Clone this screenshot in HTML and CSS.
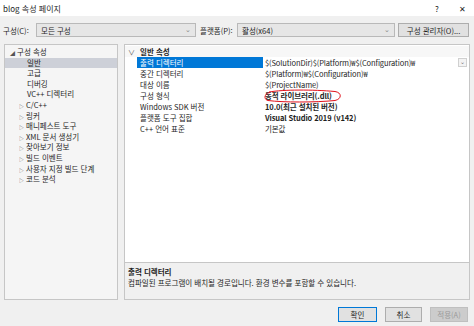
FILE: index.html
```html
<!DOCTYPE html>
<html lang="ko">

<head>
    <meta charset="UTF-8">
    <title>blog 속성 페이지</title>
    <link rel="stylesheet" href="styles.css">
</head>

<body>
    <div class="titleBar">
        <span class="title">blog 속성 페이지</span>
        <span class="help">?</span>
        <span class="close">✕</span>
    </div>

    <div class="toolbar">
        <span class="lblConfig">구성(C):</span>
        <div class="combo comboConfig"><span>모든 구성</span><span class="arrow">⌄</span></div>
        <span class="lblPlatform">플랫폼(P):</span>
        <div class="combo comboPlatform"><span>활성(x64)</span><span class="arrow">⌄</span></div>
        <div class="btn btnManager">구성 관리자(O)...</div>
    </div>

    <div class="main">
        <div class="tree">
            <div class="node root"><span class="tri">◢</span>구성 속성</div>
            <div class="node leaf selected">일반</div>
            <div class="node leaf">고급</div>
            <div class="node leaf">디버깅</div>
            <div class="node leaf">VC++ 디렉터리</div>
            <div class="node branch"><span class="tri">▷</span>C/C++</div>
            <div class="node branch"><span class="tri">▷</span>링커</div>
            <div class="node branch"><span class="tri">▷</span>매니페스트 도구</div>
            <div class="node branch"><span class="tri">▷</span>XML 문서 생성기</div>
            <div class="node branch"><span class="tri">▷</span>찾아보기 정보</div>
            <div class="node branch"><span class="tri">▷</span>빌드 이벤트</div>
            <div class="node branch"><span class="tri">▷</span>사용자 지정 빌드 단계</div>
            <div class="node branch"><span class="tri">▷</span>코드 분석</div>
        </div>

        <div class="right">
            <div class="grid">
                <div class="category"><span class="chev">∨</span>일반 속성</div>
                <div class="row selected">
                    <div class="name">출력 디렉터리</div>
                    <div class="value">$(SolutionDir)$(Platform)₩$(Configuration)₩<span class="drop">⌄</span></div>
                </div>
                <div class="row">
                    <div class="name">중간 디렉터리</div>
                    <div class="value">$(Platform)₩$(Configuration)₩</div>
                </div>
                <div class="row">
                    <div class="name">대상 이름</div>
                    <div class="value">$(ProjectName)</div>
                </div>
                <div class="row">
                    <div class="name">구성 형식</div>
                    <div class="value bold">동적 라이브러리(.dll)
                        <svg class="circle" width="80" height="14" viewBox="0 0 80 14">
                            <path d="M6 3 C20 0.5 50 0.5 72 2.5 C79 3.5 79 10 72 11.5 C52 13.5 20 13.5 5 11.5 C0.5 10.5 1 4.5 7 3.5" fill="none" stroke="#e0101a" stroke-width="1"/>
                        </svg>
                    </div>
                </div>
                <div class="row">
                    <div class="name">Windows SDK 버전</div>
                    <div class="value bold">10.0(최근 설치된 버전)</div>
                </div>
                <div class="row">
                    <div class="name">플랫폼 도구 집합</div>
                    <div class="value bold">Visual Studio 2019 (v142)</div>
                </div>
                <div class="row">
                    <div class="name">C++ 언어 표준</div>
                    <div class="value">기본값</div>
                </div>
            </div>
            <div class="desc">
                <b>출력 디렉터리</b><br>
                컴파일된 프로그램이 배치될 경로입니다. 환경 변수를 포함할 수 있습니다.
            </div>
        </div>
    </div>

    <div class="footer">
        <div class="btn btnOk">확인</div>
        <div class="btn btnCancel">취소</div>
        <div class="btn btnApply">적용(A)</div>
    </div>
</body>

</html>
```

FILE: styles.css
```css
body {
    margin: 0;
    width: 474px;
    height: 326px;
    background-color: #f0f0f0;
    font-family: "Noto Sans CJK KR", "Noto Sans", sans-serif;
    font-size: 7.5px;
    color: #1e1e1e;
    overflow: hidden;
}

.titleBar {
    height: 16px;
    background-color: #ffffff;
    display: flex;
    align-items: center;
    padding-left: 3px;
    font-size: 8px;
}

.title {
    flex: 1;
}

.help {
    width: 30px;
    text-align: center;
}

.close {
    width: 20px;
    margin-right: 2px;
    text-align: center;
    font-size: 8px;
}

.toolbar {
    display: flex;
    align-items: center;
    height: 16px;
    margin-top: 6px;
    padding-left: 3px;
}

.lblConfig {
    width: 33px;
}

.lblPlatform {
    width: 37px;
    margin-left: 4px;
}

.combo {
    height: 14px;
    border: 1px solid #b9b9b9;
    background-color: #e6e6e6;
    display: flex;
    align-items: center;
    justify-content: space-between;
    padding: 0 4px;
    box-sizing: border-box;
}

.comboConfig {
    width: 160px;
}

.comboPlatform {
    width: 158px;
}

.arrow {
    color: #888;
    font-size: 7px;
    line-height: 6px;
    padding-bottom: 3px;
}

.btn {
    height: 14px;
    border: 1px solid #adadad;
    background-color: #e1e1e1;
    box-sizing: border-box;
    display: flex;
    align-items: center;
    justify-content: center;
}

.btnManager {
    width: 71px;
    margin-left: 3px;
}

.main {
    display: flex;
    height: 256px;
    margin-top: 6px;
    padding-left: 4px;
}

.tree {
    width: 114px;
    border: 1px solid #c6c6c6;
    background-color: #f5f5f5;
    box-sizing: border-box;
    padding-top: 2px;
}

.node {
    height: 10.6px;
    line-height: 10.6px;
    white-space: nowrap;
}

.root {
    padding-left: 5px;
}

.tri {
    display: inline-block;
    width: 7px;
    font-size: 5px;
    color: #555;
}

.leaf {
    padding-left: 22px;
}

.branch {
    padding-left: 14px;
}

.node.selected {
    background-color: #cdd0d8;
}

.right {
    width: 346px;
    margin-left: 6px;
    display: flex;
    flex-direction: column;
}

.grid {
    position: relative;
    height: 219px;
    border: 1px solid #c6c6c6;
    box-sizing: border-box;
    background-color: #ffffff;
    padding-top: 1px;
}

.category {
    height: 11px;
    line-height: 11px;
    font-weight: bold;
    background-color: #f7f7f7;
    padding-left: 3px;
}

.chev {
    display: inline-block;
    width: 12px;
    font-weight: normal;
    font-size: 7px;
    color: #555;
}

.row {
    display: flex;
    height: 11px;
    line-height: 11px;
    margin-left: 12px;
    white-space: nowrap;
}

.name {
    width: 126px;
    padding-left: 3px;
    box-sizing: border-box;
}

.value {
    flex: 1;
    position: relative;
    padding-left: 2px;
    letter-spacing: -0.1px;
}

.row.selected .name {
    background-color: #0078d7;
    color: #ffffff;
}

.bold {
    font-weight: bold;
}

.drop {
    position: absolute;
    right: 2px;
    top: 1px;
    width: 9px;
    height: 9px;
    line-height: 5px;
    border: 1px solid #d0d0d0;
    background-color: #f3f3f3;
    box-sizing: border-box;
    text-align: center;
    font-size: 6px;
    color: #777;
    letter-spacing: 0;
}

.circle {
    position: absolute;
    left: 0;
    top: -1px;
}

.desc {
    height: 37px;
    border: 1px solid #c6c6c6;
    border-top: none;
    box-sizing: border-box;
    padding: 3px 3px;
    line-height: 11px;
}

.footer {
    display: flex;
    justify-content: flex-end;
    margin-top: 7px;
    padding-right: 6px;
}

.btnOk {
    width: 39px;
    height: 15px;
    border-color: #0078d7;
}

.btnCancel {
    width: 37px;
    height: 15px;
    margin-left: 8px;
}

.btnApply {
    width: 38px;
    height: 15px;
    margin-left: 8px;
    background-color: #cccccc;
    border-color: #bfbfbf;
    color: #9a9a9a;
}
```
